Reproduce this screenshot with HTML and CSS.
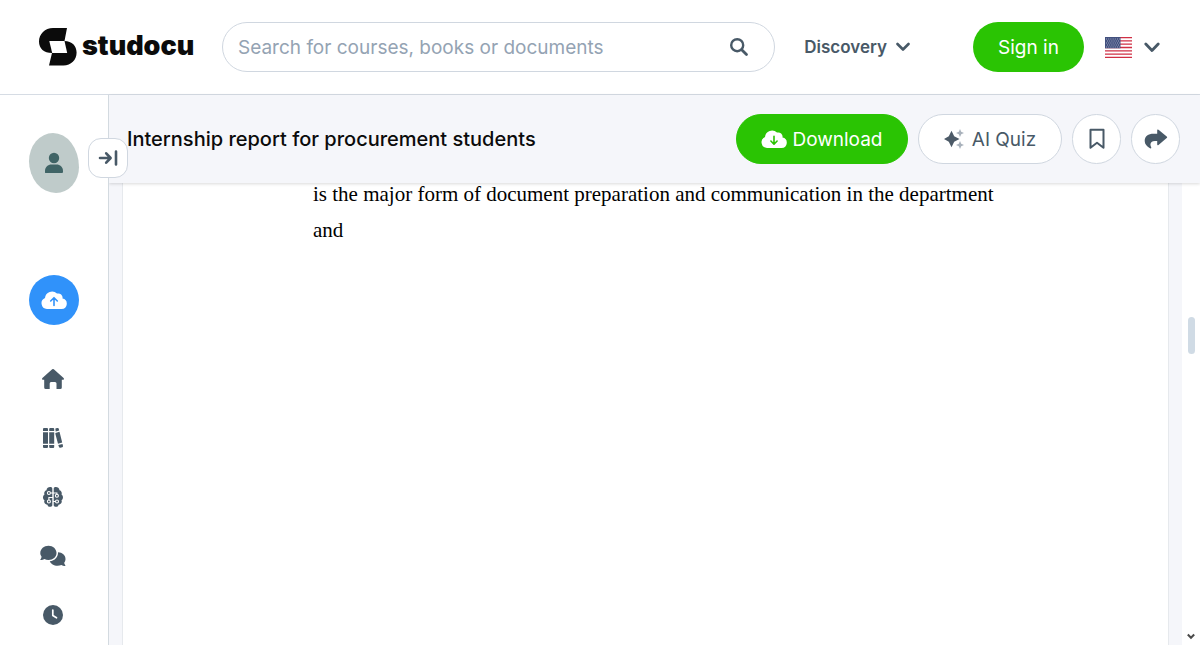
FILE: index.html
```html
<!DOCTYPE html>
<html lang="en">
<head>
<meta charset="utf-8">
<meta name="viewport" content="width=device-width, initial-scale=1">
<title>Internship report for procurement students - Studocu</title>
<link rel="stylesheet" href="styles.css">
</head>
<body>
<header class="header">
  <a class="logo" href="#" aria-label="studocu">
    <svg class="logo-mark" viewBox="0 0 38 38" width="38" height="38" aria-hidden="true"><path fill="#0b0b0b" d="M14 0H28L25.500 13C33 13 37.600 18 37.600 24.500C37.600 32 32 37.500 24.500 37.500H10L13 25C5 25 0 20.500 0 13.500C0 6 6 0 14 0Z"/><path fill="#fff" d="M10.300 13H25.500L28.200 25H13.200Z"/></svg>
    <span class="logo-text">studocu</span>
  </a>
  <form class="search" role="search">
    <input class="search-input" type="text" aria-label="Search" placeholder="Search for courses, books or documents">
    <button class="search-button" type="button" aria-label="Search"><svg viewBox="0 0 20 20" width="20" height="20" fill="none" stroke="currentColor"><circle cx="8.200" cy="8.200" r="6" stroke-width="2.400"/><path d="M12.700 12.700L17.500 17.500" stroke-width="2.800" stroke-linecap="round"/></svg></button>
  </form>
  <button class="discovery" type="button">Discovery
    <svg viewBox="0 0 14 10" width="14" height="10" fill="none" stroke="currentColor" stroke-width="2.600" stroke-linecap="round" stroke-linejoin="round"><path d="M1.500 2L7 7.500L12.500 2"/></svg>
  </button>
  <button class="sign-in" type="button">Sign in</button>
  <button class="language" type="button" aria-label="Language">
    <svg viewBox="0 0 27 21" width="27" height="21"><path fill="#fff" d="M0 0H27V21H0Z"/><path d="M0 .6H27M0 3.900H27M0 7.200H27M0 10.500H27M0 13.800H27M0 17.100H27M0 20.400H27" stroke="#d02f44" stroke-width="1.300"/><path fill="#43517f" d="M0 0H15.500V11.300H0Z"/><path d="M1 2H15M2 4H15M1 6H15M2 8H15M1 10H15" stroke="#aab1ca" stroke-width=".9" stroke-dasharray="1 1.200"/></svg>
    <svg class="language-arrow" viewBox="0 0 16 11" width="16" height="11" fill="none" stroke="currentColor" stroke-width="2.800" stroke-linecap="round" stroke-linejoin="round"><path d="M1.800 2L8 8.500L14.200 2"/></svg>
  </button>
</header>
<div class="layout">
  <nav class="sidebar" aria-label="Main">
    <a class="avatar" href="#" aria-label="Profile"><svg viewBox="0 0 20 22" width="20" height="22" fill="#406466"><circle cx="10" cy="6" r="5.200"/><path d="M1 20.500V19C1 15 4 12.500 7.500 12.500H12.500C16 12.500 19 15 19 19V20Q19 21 18 21H2Q1 21 1 20.500Z"/></svg></a>
    <a class="upload" href="#" aria-label="Upload"><svg viewBox="0 0 26 20" width="26" height="20"><path fill="#fff" d="M6 19A5.800 5.800 0 0 1 4 7.900A7 7 0 0 1 16 3.600A4.300 4.300 0 0 1 21.500 8.500A5.300 5.300 0 0 1 20.500 19Z"/><path d="M13 15.500V8M9.700 11L13 7.700L16.300 11" fill="none" stroke="#3092fa" stroke-width="1.600" stroke-linecap="round" stroke-linejoin="round"/></svg></a>
    <ul class="menu">
      <li><a href="#" aria-label="Home"><svg viewBox="0 0 24 22" width="24" height="22" fill="currentColor"><path d="M11.200 1.300Q12 .6 12.800 1.300L22.600 10Q23.500 11 22.500 11.800H20.800V19.500Q20.800 21 19.300 21H15.500V15.500Q15.500 14 14 14H10Q8.700 14 8.700 15.500V21H4.700Q3.200 21 3.200 19.500V11.800H1.500Q.5 11 1.400 10Z"/></svg></a></li>
      <li><a href="#" aria-label="Library"><svg viewBox="0 0 22 22" width="22" height="22" fill="currentColor"><path d="M1 2Q1 1 2 1H5Q6 1 6 2V4H1ZM1 5.300H6V16.700H1ZM1 18H6V20Q6 21 5 21H2Q1 21 1 20ZM7.200 2Q7.200 1 8.200 1H11.200Q12.200 1 12.200 2V4H7.200ZM7.200 5.300H12.200V16.700H7.200ZM7.200 18H12.200V20Q12.200 21 11.200 21H8.200Q7.200 21 7.200 20ZM13.400 2.200Q13.300 1.400 14 1.200L15.500 1Q16.500 .8 16.800 1.700L17.200 3.600L13.700 4.600ZM13.400 5.900L17.500 4.800L20.200 15.600L16 16.800L13.400 7ZM16.300 18L20.500 16.900L21 19Q21.200 20 20.300 20.300L18.300 20.800Q17.200 21 17 20.100Z"/></svg></a></li>
      <li><a href="#" aria-label="AI study"><svg viewBox="0 0 22 22" width="22" height="22"><path fill="currentColor" d="M10.300 2.500V19.500C9.800 21.300 5.800 21.600 5.500 18.700C2.600 18.500 1.700 16 2.500 14.300C.4 13 .6 9.700 2.500 8.600C1.600 6.700 2.700 4.800 4.500 4.300C4.700 .6 9.800.1 10.300 2.500ZM11.700 2.500C12.200.1 17.300.6 17.500 4.300C19.300 4.800 20.400 6.700 19.500 8.600C21.400 9.700 21.600 13 19.500 14.300C20.300 16 19.400 18.500 16.500 18.700C16.200 21.600 12.200 21.300 11.700 19.500Z"/><g fill="none" stroke="#fff" stroke-width="1.100"><circle cx="6.900" cy="7" r="1.500"/><circle cx="14.900" cy="9.800" r="1.500"/><circle cx="6.900" cy="15.500" r="1.500"/><circle cx="15" cy="15.500" r="1.500"/><path d="M8.400 7H14.900V8.300M6.900 14V11.500H11M11 15.500H13.500"/></g></svg></a></li>
      <li><a href="#" aria-label="Chat"><svg viewBox="0 0 26 22" width="26" height="22" fill="currentColor"><path d="M8.500 .8C13 .8 16.500 4 16.500 8S13 15 8.500 15C7 15 5.600 14.700 4.400 14.100C3.200 14.900 1.700 15.200 .5 15C.1 14.700.4 14.300 .8 13.900C1.300 13.200 1.600 12.300 1.500 11.500C.6 10.300.3 9.200.3 8C.3 4 4 .8 8.500 .8Z"/><path d="M18 7.300C22.300 7.400 25.500 10.300 25.500 14C25.500 15.500 25 16.800 24.200 17.800C24.200 18.700 24.600 19.600 25.300 20.200C25.600 20.600 25.500 20.900 25 21C23.700 21.100 22.500 20.700 21.500 20C16.500 22 11 19.800 9.800 16.300C14.800 15.700 18.300 12 18 7.300Z"/></svg></a></li>
      <li><a href="#" aria-label="Recent"><svg viewBox="0 0 22 22" width="22" height="22"><circle cx="11" cy="11" r="10" fill="currentColor"/><path d="M10.800 6V11.500L14.500 13.800" fill="none" stroke="#fff" stroke-width="1.700" stroke-linecap="round" stroke-linejoin="round"/></svg></a></li>
    </ul>
    <button class="expand" type="button" aria-label="Expand sidebar"><svg viewBox="0 0 20 18" width="20" height="18" fill="none" stroke="currentColor" stroke-width="2.600" stroke-linecap="round" stroke-linejoin="round"><path d="M2 9H12M8.200 4.300L12.600 9L8.200 13.700M18 2.500V15.500"/></svg></button>
  </nav>
  <main class="content">
    <div class="toolbar">
      <h1 class="title">Internship report for procurement students</h1>
      <button class="button download" type="button"><svg viewBox="0 0 26 20" width="26" height="20"><path fill="#fff" d="M6 19A5.800 5.800 0 0 1 4 7.900A7 7 0 0 1 16 3.600A4.300 4.300 0 0 1 21.500 8.500A5.300 5.300 0 0 1 20.500 19Z"/><path d="M13 7.300V15M9.900 12L13 15.200L16.100 12" fill="none" stroke="#2ac403" stroke-width="1.600" stroke-linecap="round" stroke-linejoin="round"/></svg>Download</button>
      <button class="button quiz" type="button"><svg viewBox="0 0 20 20" width="20" height="20"><path fill="#4c5a67" d="M7.500 1.700L10.200 7.300L15.500 10L10.200 12.700L7.500 18.300L4.800 12.700L-.2 10L4.800 7.300Z"/><path fill="#a9b2bc" d="M16 0L17.200 2.800L20 4L17.200 5.200L16 8L14.800 5.200L12 4L14.800 2.800ZM16 12L17.200 14.800L20 16L17.200 17.200L16 20L14.800 17.200L12 16L14.800 14.800Z"/></svg>AI Quiz</button>
      <button class="button round" type="button" aria-label="Save"><svg viewBox="0 0 16 22" width="16" height="22" fill="none" stroke="currentColor" stroke-width="2"><path d="M1.500 1.800H14.500V19.800L8 14.800L1.500 19.800Z" stroke-linejoin="round"/></svg></button>
      <button class="button round" type="button" aria-label="Share"><svg viewBox="0 0 24 20" width="24" height="20" fill="currentColor"><path d="M13.200 1.300Q13.200 -.2 14.500 .8L22.700 7.500Q23.600 8.300 22.700 9.100L14.500 15.900Q13.200 16.700 13.200 15.200V12H11C6.500 12 5.500 15.200 7.300 18.500Q7.300 19.700 6 19.300C2.700 17.500.7 15 .7 12C.7 7.300 4.300 4.800 9.500 4.800H13.200Z"/></svg></button>
    </div>
    <div class="viewer">
      <article class="page"><p>is the major form of document preparation and communication in the department and</p></article>
      <div class="scrollbar" aria-hidden="true">
        <span class="thumb"></span>
        <svg viewBox="0 0 8 7" width="8" height="7" fill="none" stroke="#4b4b4b" stroke-width="2"><path d="M.8 1.500L4 4.800L7.200 1.500"/></svg>
      </div>
    </div>
  </main>
</div>
</body>
</html>
```
FILE: styles.css
```css
* { box-sizing: border-box; }
body {
  margin: 0;
  height: 100vh;
  display: flex;
  flex-direction: column;
  overflow: hidden;
  background: #fff;
  color: #485967;
  font-family: "Inter", "Liberation Sans", sans-serif;
}
button { font: inherit; color: inherit; border: 0; padding: 0; background: none; cursor: pointer; }
a { color: inherit; text-decoration: none; }
svg { display: block; flex: none; }

.header {
  display: flex;
  align-items: center;
  flex: none;
  height: 95px;
  padding: 0 40px 0 39px;
  border-bottom: 1px solid #d6dce4;
}
.logo { display: flex; align-items: center; gap: 5px; width: 183px; flex: none; }
.logo-text { color: #0b0b0b; font-size: 27px; line-height: 32px; font-weight: 900; padding-bottom: 2px; }
.search {
  display: flex;
  align-items: center;
  flex: 1;
  height: 50px;
  padding: 0 25px 0 15px;
  border: 1px solid #d0d7e0;
  border-radius: 25px;
}
.search-input {
  flex: 1;
  min-width: 0;
  padding: 0;
  border: 0;
  outline: 0;
  background: none;
  font: inherit;
  font-size: 19px;
  color: #485967;
}
.search-input::placeholder { color: #94a3b3; opacity: 1; }
.discovery {
  display: flex;
  align-items: center;
  gap: 9px;
  margin: 0 63px 0 29px;
  font-size: 17px;
  font-weight: 600;
}
.sign-in {
  width: 111px;
  height: 50px;
  border-radius: 25px;
  background: #2ac403;
  color: #fff;
  font-size: 19px;
}
.language { display: flex; align-items: center; gap: 12px; margin-left: 21px; }

.layout { display: flex; flex: 1; min-height: 0; }
.sidebar {
  position: relative;
  z-index: 2;
  display: flex;
  flex-direction: column;
  align-items: center;
  flex: none;
  width: 109px;
  padding-top: 38px;
  border-right: 1px solid #d3dae0;
  background: #fff;
}
.avatar, .upload { display: flex; align-items: center; justify-content: center; flex: none; width: 50px; }
.avatar { height: 60px; border-radius: 48% 52% 46% 54% / 47% 57% 43% 53%; background: #bfcbca; }
.upload { height: 50px; margin-top: 82px; border-radius: 50%; background: #3092fa; }
.menu {
  list-style: none;
  margin: 24px 0 0;
  padding: 0 3px 0 0;
}
.menu a { display: flex; align-items: center; justify-content: center; height: 59px; }
.expand {
  position: absolute;
  top: 43px;
  right: -20px;
  display: flex;
  align-items: center;
  justify-content: center;
  width: 40px;
  height: 40px;
  border: 1px solid #d0d7e0;
  border-radius: 13px;
  background: #fff;
}

.content { display: flex; flex-direction: column; flex: 1; min-width: 0; background: #f5f6fa; }
.toolbar {
  position: relative;
  z-index: 1;
  display: flex;
  align-items: center;
  gap: 10px;
  flex: none;
  height: 88px;
  padding: 0 20px 0 18px;
  background: #f5f6fa;
  box-shadow: 0 1px 3px #00000026;
}
.title { flex: 1; margin: 0; color: #0b0b0b; font-size: 20px; line-height: 24px; font-weight: 500; }
.button {
  display: flex;
  align-items: center;
  justify-content: center;
  flex: none;
  height: 50px;
  border: 1px solid #d0d7e0;
  border-radius: 25px;
  background: #fff;
  font-size: 19px;
}
.download { gap: 5px; width: 172px; border-color: #2ac403; background: #2ac403; color: #fff; }
.quiz { gap: 8px; width: 144px; }
.round { width: 49px; }
.viewer { display: flex; flex: 1; min-height: 0; }
.page {
  flex: 1;
  margin: 0 13px;
  padding: 0 158px 0 190px;
  border: 1px solid #e6e9ed;
  border-width: 0 1px;
  background: #fff;
  color: #000;
  font-family: "Liberation Serif", "Times New Roman", serif;
  font-size: 21px;
  line-height: 36px;
}
/* The document is scrolled partly beneath the toolbar. */
.page p { margin: -7px 0 0; }
.scrollbar {
  display: flex;
  flex-direction: column;
  align-items: center;
  justify-content: space-between;
  width: 18px;
  padding: 134px 0 5px;
  background: #fff;
}
.thumb { width: 7px; height: 37px; border-radius: 4px; background: #d0dbe5; }
```
